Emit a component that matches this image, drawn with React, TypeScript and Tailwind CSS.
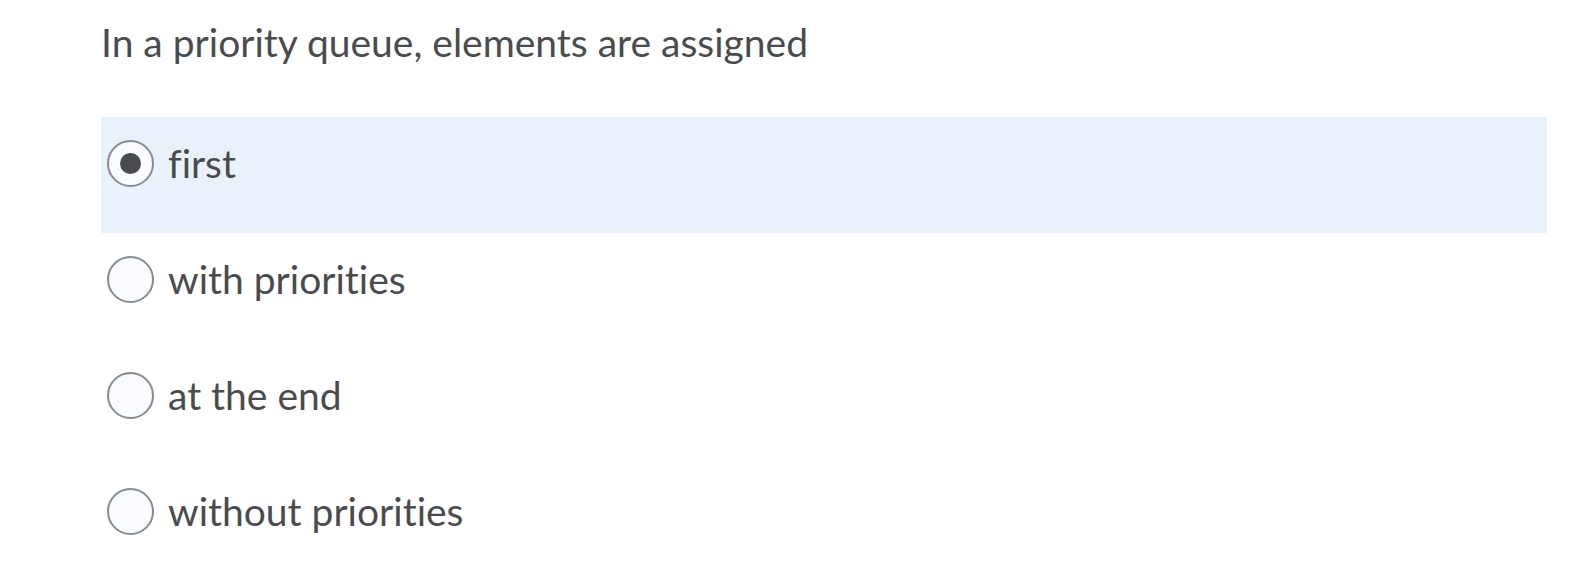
import { useState } from 'react'

const OPTIONS = ['first', 'with priorities', 'at the end', 'without priorities']

export default function App() {
  const [selected, setSelected] = useState(0)

  return (
    <div className="w-[1596px] h-[562px] bg-white text-[#494c4e] font-['Lato','Liberation_Sans',sans-serif] [font-variant-ligatures:none] overflow-hidden">
      <div className="pl-[101px] pr-[49px]">
        {/* Question */}
        <div className="pt-[19px] h-[117px] text-[39px] leading-[47px]">
          In a priority queue, elements are assigned
        </div>

        {/* Answers */}
        <div>
          {OPTIONS.map((opt, i) => {
            const isSelected = selected === i
            return (
              <label
                key={opt}
                onClick={() => setSelected(i)}
                className={`flex items-start h-[116px] pt-[23px] pl-[6px] cursor-pointer ${
                  isSelected ? 'bg-[#e9f1fb]' : 'bg-white'
                }`}
              >
                <span className="w-[47px] h-[47px] shrink-0 rounded-full border-2 border-[#868c8f] bg-[#f9fbff] flex items-center justify-center">
                  {isSelected && <span className="w-[21px] h-[21px] rounded-full bg-[#494c4e]" />}
                </span>
                <span className="ml-[14px] text-[39px] leading-[47px]">{opt}</span>
              </label>
            )
          })}
        </div>
      </div>
    </div>
  )
}
